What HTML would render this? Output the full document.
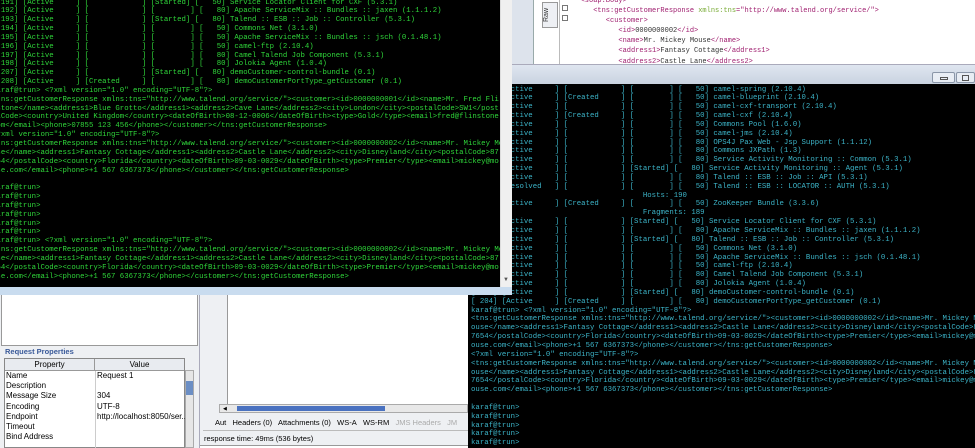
<!DOCTYPE html>
<html><head><meta charset="utf-8"><style>
*{margin:0;padding:0;box-sizing:border-box}
body{width:975px;height:448px;overflow:hidden;background:#000;position:relative;font-family:"Liberation Sans",sans-serif}
.t{position:absolute;font-family:"Liberation Mono",monospace;font-size:7.35px;line-height:8.85px;white-space:pre}
.g{color:#2fd63a}
.c{color:#3cb4c8}
</style></head><body>

<!-- right cyan terminal -->
<div style="position:absolute;left:468px;top:84px;width:507px;height:364px;background:#000;overflow:hidden">
<div class="t c" style="left:3px;top:1.5px">[ 170] [Active     ] [            ] [        ] [   50] camel-spring (2.10.4)
[ 171] [Active     ] [Created     ] [        ] [   50] camel-blueprint (2.10.4)
[ 172] [Active     ] [            ] [        ] [   50] camel-cxf-transport (2.10.4)
[ 173] [Active     ] [Created     ] [        ] [   50] camel-cxf (2.10.4)
[ 174] [Active     ] [            ] [        ] [   50] Commons Pool (1.6.0)
[ 175] [Active     ] [            ] [        ] [   50] camel-jms (2.10.4)
[ 176] [Active     ] [            ] [        ] [   80] OPS4J Pax Web - Jsp Support (1.1.12)
[ 177] [Active     ] [            ] [        ] [   80] Commons JXPath (1.3)
[ 178] [Active     ] [            ] [        ] [   80] Service Activity Monitoring :: Common (5.3.1)
[ 179] [Active     ] [            ] [Started] [   80] Service Activity Monitoring :: Agent (5.3.1)
[ 180] [Active     ] [            ] [        ] [   80] Talend :: ESB :: Job :: API (5.3.1)
[ 189] [Resolved   ] [            ] [        ] [   50] Talend :: ESB :: LOCATOR :: AUTH (5.3.1)
                                       Hosts: 190
[ 190] [Active     ] [Created     ] [        ] [   50] ZooKeeper Bundle (3.3.6)
                                       Fragments: 189
[ 191] [Active     ] [            ] [Started] [   50] Service Locator Client for CXF (5.3.1)
[ 192] [Active     ] [            ] [        ] [   80] Apache ServiceMix :: Bundles :: jaxen (1.1.1.2)
[ 193] [Active     ] [            ] [Started] [   80] Talend :: ESB :: Job :: Controller (5.3.1)
[ 194] [Active     ] [            ] [        ] [   50] Commons Net (3.1.0)
[ 195] [Active     ] [            ] [        ] [   50] Apache ServiceMix :: Bundles :: jsch (0.1.48.1)
[ 196] [Active     ] [            ] [        ] [   50] camel-ftp (2.10.4)
[ 197] [Active     ] [            ] [        ] [   80] Camel Talend Job Component (5.3.1)
[ 198] [Active     ] [            ] [        ] [   80] Jolokia Agent (1.0.4)
[ 203] [Active     ] [            ] [Started] [   80] demoCustomer-control-bundle (0.1)
[ 204] [Active     ] [Created     ] [        ] [   80] demoCustomerPortType_getCustomer (0.1)
karaf@trun&gt; &lt;?xml version="1.0" encoding="UTF-8"?&gt;
&lt;tns:getCustomerResponse xmlns:tns="http://www.talend.org/service/"&gt;&lt;customer&gt;&lt;id&gt;0000000002&lt;/id&gt;&lt;name&gt;Mr. Mickey M
ouse&lt;/name&gt;&lt;address1&gt;Fantasy Cottage&lt;/address1&gt;&lt;address2&gt;Castle Lane&lt;/address2&gt;&lt;city&gt;Disneyland&lt;/city&gt;&lt;postalCode&gt;8
7654&lt;/postalCode&gt;&lt;country&gt;Florida&lt;/country&gt;&lt;dateOfBirth&gt;09-03-0029&lt;/dateOfBirth&gt;&lt;type&gt;Premier&lt;/type&gt;&lt;email&gt;mickey@m
ouse.com&lt;/email&gt;&lt;phone&gt;+1 567 6367373&lt;/phone&gt;&lt;/customer&gt;&lt;/tns:getCustomerResponse&gt;
&lt;?xml version="1.0" encoding="UTF-8"?&gt;
&lt;tns:getCustomerResponse xmlns:tns="http://www.talend.org/service/"&gt;&lt;customer&gt;&lt;id&gt;0000000002&lt;/id&gt;&lt;name&gt;Mr. Mickey M
ouse&lt;/name&gt;&lt;address1&gt;Fantasy Cottage&lt;/address1&gt;&lt;address2&gt;Castle Lane&lt;/address2&gt;&lt;city&gt;Disneyland&lt;/city&gt;&lt;postalCode&gt;8
7654&lt;/postalCode&gt;&lt;country&gt;Florida&lt;/country&gt;&lt;dateOfBirth&gt;09-03-0029&lt;/dateOfBirth&gt;&lt;type&gt;Premier&lt;/type&gt;&lt;email&gt;mickey@m
ouse.com&lt;/email&gt;&lt;phone&gt;+1 567 6367373&lt;/phone&gt;&lt;/customer&gt;&lt;/tns:getCustomerResponse&gt;

karaf@trun&gt;
karaf@trun&gt;
karaf@trun&gt;
karaf@trun&gt;
karaf@trun&gt;</div>
</div>

<!-- top-right XML viewer -->
<div style="position:absolute;left:512px;top:0;width:463px;height:64px;background:#fff;overflow:hidden">
  <div style="position:absolute;left:0;top:0;width:22px;height:64px;background:#dde3ec;border-right:1px solid #9aa"></div>
  <div style="position:absolute;left:30px;top:2px;width:16px;height:26px;background:#eef0f4;border:1px solid #999;font-size:7px;writing-mode:vertical-rl;transform:rotate(180deg);text-align:center;color:#333">Raw</div>
  <div style="position:absolute;left:47px;top:0;width:1px;height:64px;background:#bbb"></div>
  <div style="position:absolute;left:50px;top:5px;width:6px;height:6px;border:1px solid #777"></div>
  <div style="position:absolute;left:50px;top:15px;width:6px;height:6px;border:1px solid #777"></div>
  <div class="t" style="left:56px;top:-4px;font-size:7px;line-height:10.1px;color:#333"><span style="color:#a02070">   &lt;soap:Body&gt;</span>
<span style="color:#a02070">      &lt;tns:getCustomerResponse</span> <span style="color:#7a3">xmlns:tns</span><span style="color:#a02070">="http://www.talend.org/service/"&gt;</span>
<span style="color:#a02070">         &lt;customer&gt;</span>
<span style="color:#a02070">            &lt;id&gt;</span>0000000002<span style="color:#a02070">&lt;/id&gt;</span>
<span style="color:#a02070">            &lt;name&gt;</span>Mr. Mickey Mouse<span style="color:#a02070">&lt;/name&gt;</span>
<span style="color:#a02070">            &lt;address1&gt;</span>Fantasy Cottage<span style="color:#a02070">&lt;/address1&gt;</span>
<span style="color:#a02070">            &lt;address2&gt;</span>Castle Lane<span style="color:#a02070">&lt;/address2&gt;</span></div>
</div>
<div style="position:absolute;left:512px;top:64px;width:463px;height:20px;background:linear-gradient(#dfe6f0,#c9d3e0);border-top:1px solid #aab"></div>
<div style="position:absolute;left:932px;top:72px;width:23px;height:11px;border:1px solid #8a96a8;border-radius:2px;background:#e8edf4"><div style="margin:4px auto 0;width:8px;height:3px;border:1px solid #555"></div></div>
<div style="position:absolute;left:956px;top:72px;width:19px;height:11px;border:1px solid #8a96a8;border-radius:2px;background:#e8edf4"><div style="margin:2px auto 0;width:7px;height:6px;border:1px solid #555"></div></div>

<!-- left green terminal -->
<div style="position:absolute;left:0;top:0;width:512px;height:295px;background:#c9dcef">
 <div style="position:absolute;left:0;top:0;width:500px;height:287px;background:#000;overflow:hidden">
<div class="t g" style="left:-8px;top:-1.5px">[ 191] [Active     ] [            ] [Started] [   50] Service Locator Client for CXF (5.3.1)
[ 192] [Active     ] [            ] [        ] [   80] Apache ServiceMix :: Bundles :: jaxen (1.1.1.2)
[ 193] [Active     ] [            ] [Started] [   80] Talend :: ESB :: Job :: Controller (5.3.1)
[ 194] [Active     ] [            ] [        ] [   50] Commons Net (3.1.0)
[ 195] [Active     ] [            ] [        ] [   50] Apache ServiceMix :: Bundles :: jsch (0.1.48.1)
[ 196] [Active     ] [            ] [        ] [   50] camel-ftp (2.10.4)
[ 197] [Active     ] [            ] [        ] [   80] Camel Talend Job Component (5.3.1)
[ 198] [Active     ] [            ] [        ] [   80] Jolokia Agent (1.0.4)
[ 207] [Active     ] [            ] [Started] [   80] demoCustomer-control-bundle (0.1)
[ 208] [Active     ] [Created     ] [        ] [   80] demoCustomerPortType_getCustomer (0.1)
karaf@trun&gt; &lt;?xml version="1.0" encoding="UTF-8"?&gt;
&lt;tns:getCustomerResponse xmlns:tns="http://www.talend.org/service/"&gt;&lt;customer&gt;&lt;id&gt;0000000001&lt;/id&gt;&lt;name&gt;Mr. Fred Fli
nstone&lt;/name&gt;&lt;address1&gt;Blue Grotto&lt;/address1&gt;&lt;address2&gt;Cave Lane&lt;/address2&gt;&lt;city&gt;London&lt;/city&gt;&lt;postalCode&gt;SW1&lt;/post
alCode&gt;&lt;country&gt;United Kingdom&lt;/country&gt;&lt;dateOfBirth&gt;08-12-0006&lt;/dateOfBirth&gt;&lt;type&gt;Gold&lt;/type&gt;&lt;email&gt;fred@flinstone.
com&lt;/email&gt;&lt;phone&gt;07855 123 456&lt;/phone&gt;&lt;/customer&gt;&lt;/tns:getCustomerResponse&gt;
&lt;?xml version="1.0" encoding="UTF-8"?&gt;
&lt;tns:getCustomerResponse xmlns:tns="http://www.talend.org/service/"&gt;&lt;customer&gt;&lt;id&gt;0000000002&lt;/id&gt;&lt;name&gt;Mr. Mickey Mo
use&lt;/name&gt;&lt;address1&gt;Fantasy Cottage&lt;/address1&gt;&lt;address2&gt;Castle Lane&lt;/address2&gt;&lt;city&gt;Disneyland&lt;/city&gt;&lt;postalCode&gt;87
654&lt;/postalCode&gt;&lt;country&gt;Florida&lt;/country&gt;&lt;dateOfBirth&gt;09-03-0029&lt;/dateOfBirth&gt;&lt;type&gt;Premier&lt;/type&gt;&lt;email&gt;mickey@mo
use.com&lt;/email&gt;&lt;phone&gt;+1 567 6367373&lt;/phone&gt;&lt;/customer&gt;&lt;/tns:getCustomerResponse&gt;

karaf@trun&gt;
karaf@trun&gt;
karaf@trun&gt;
karaf@trun&gt;
karaf@trun&gt;
karaf@trun&gt;
karaf@trun&gt; &lt;?xml version="1.0" encoding="UTF-8"?&gt;
&lt;tns:getCustomerResponse xmlns:tns="http://www.talend.org/service/"&gt;&lt;customer&gt;&lt;id&gt;0000000002&lt;/id&gt;&lt;name&gt;Mr. Mickey Mo
use&lt;/name&gt;&lt;address1&gt;Fantasy Cottage&lt;/address1&gt;&lt;address2&gt;Castle Lane&lt;/address2&gt;&lt;city&gt;Disneyland&lt;/city&gt;&lt;postalCode&gt;87
654&lt;/postalCode&gt;&lt;country&gt;Florida&lt;/country&gt;&lt;dateOfBirth&gt;09-03-0029&lt;/dateOfBirth&gt;&lt;type&gt;Premier&lt;/type&gt;&lt;email&gt;mickey@mo
use.com&lt;/email&gt;&lt;phone&gt;+1 567 6367373&lt;/phone&gt;&lt;/customer&gt;&lt;/tns:getCustomerResponse&gt;</div>
 </div>
 <div style="position:absolute;left:500px;top:0;width:12px;height:287px;background:#f0f0f0;border-left:1px solid #ddd"></div>
 <div style="position:absolute;left:503px;top:277px;font-size:6px;color:#555">▼</div>
</div>

<!-- bottom-left soapUI -->
<div style="position:absolute;left:0;top:295px;width:468px;height:153px;background:#eef0f3;overflow:hidden;font-size:8px;color:#000">
  <div style="position:absolute;left:1px;top:0;width:197px;height:51px;background:#fff;border:1px solid #999;border-top:none"></div>
  <div style="position:absolute;left:199px;top:0;width:1px;height:153px;background:#aab"></div>
  <div style="position:absolute;left:5px;top:52px;color:#3a5a9a;font-weight:bold;font-size:7.5px">Request Properties</div>
  <div style="position:absolute;left:4px;top:63px;width:181px;height:90px;background:#fff;border:1px solid #888">
    <div style="display:flex;height:12px;background:#e8ebf0;border-bottom:1px solid #999">
      <div style="width:90px;text-align:center;border-right:1px solid #999;line-height:12px">Property</div>
      <div style="flex:1;text-align:center;line-height:12px">Value</div>
    </div>
    <div style="position:absolute;left:90px;top:12px;width:1px;height:80px;background:#ccc"></div>
    <div style="line-height:10.2px;padding-left:1px">
      <div>Name<span style="position:absolute;left:92px">Request 1</span></div>
      <div>Description</div>
      <div>Message Size<span style="position:absolute;left:92px">304</span></div>
      <div>Encoding<span style="position:absolute;left:92px">UTF-8</span></div>
      <div>Endpoint<span style="position:absolute;left:92px">http://localhost:8050/ser...</span></div>
      <div>Timeout</div>
      <div>Bind Address</div>
    </div>
  </div>
  <div style="position:absolute;left:185px;top:75px;width:9px;height:78px;background:#e6e6e6;border:1px solid #aaa">
    <div style="position:absolute;top:10px;left:0;width:7px;height:14px;background:#6b8ec4"></div>
  </div>
  <!-- right part -->
  <div style="position:absolute;left:227px;top:0;width:241px;height:110px;background:#fff;border-left:1px solid #999;border-bottom:1px solid #999"></div>
  <div style="position:absolute;left:219px;top:109px;width:249px;height:9px;background:#e8e8e8;border:1px solid #aaa">
    <div style="position:absolute;left:3px;top:1px;font-size:5px">◀</div>
    <div style="position:absolute;left:17px;top:1px;width:148px;height:5px;background:#4a72c0"></div>
  </div>
  <div style="position:absolute;left:215px;top:123px;white-space:nowrap;font-size:7.5px">Aut&nbsp;&nbsp; Headers (0)&nbsp;&nbsp; Attachments (0)&nbsp;&nbsp; WS-A&nbsp;&nbsp; WS-RM&nbsp;&nbsp; <span style="color:#aaa">JMS Headers&nbsp;&nbsp; JM</span></div>
  <div style="position:absolute;left:203px;top:135px;width:265px;height:1px;background:#bbb"></div>
  <div style="position:absolute;left:204px;top:139px;white-space:nowrap;font-size:7.5px">response time: 49ms (536 bytes)</div>
  <div style="position:absolute;left:200px;top:150px;width:268px;height:3px;background:#fff;border-top:1px solid #999"></div>
</div>
</body></html>
